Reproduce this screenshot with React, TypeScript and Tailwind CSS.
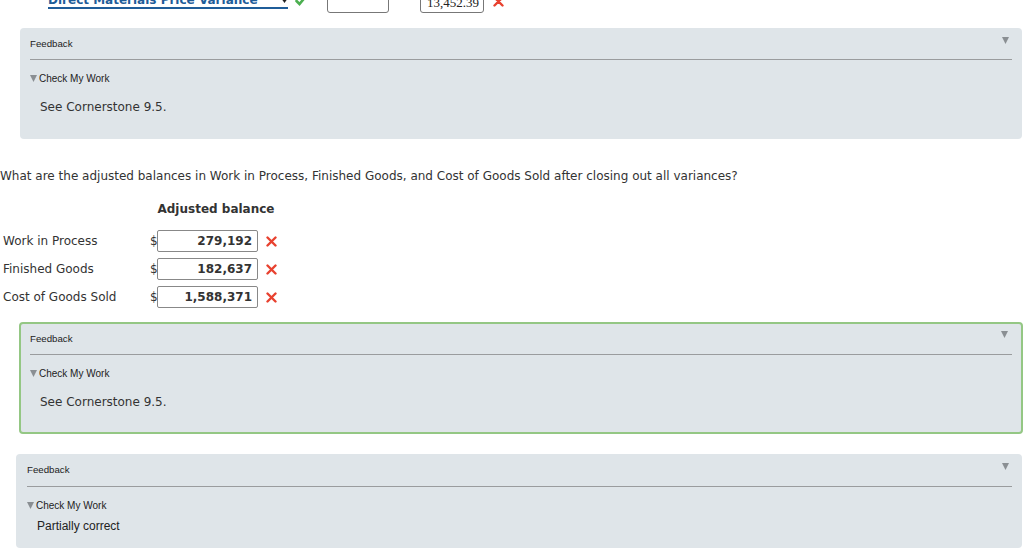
import React from "react";

const verdana = { fontFamily: '"DejaVu Sans", Verdana, sans-serif' };
const helv = { fontFamily: '"Liberation Sans", Arial, Helvetica, sans-serif' };

function Tri({ className = "" }: { className?: string }) {
  return (
    <svg width="7" height="7" viewBox="0 0 7 7" className={className}>
      <polygon points="0,0 7,0 3.5,7" fill="#8a8f93" />
    </svg>
  );
}

function RedX() {
  return (
    <svg width="11" height="11" viewBox="0 0 11 11">
      <path d="M1.5 1.5 L9.5 9.5 M9.5 1.5 L1.5 9.5" stroke="#e8412f" strokeWidth="2.4" strokeLinecap="round" />
    </svg>
  );
}

function Feedback({
  green = false,
  body,
  compact = false,
}: {
  green?: boolean;
  body: React.ReactNode;
  compact?: boolean;
}) {
  return (
    <div
      className={
        "relative h-full rounded-[4px] bg-[#dfe5e9] " +
        (green ? "border-2 border-[#94c784] " : "")
      }
    >
      <Tri className={"absolute right-[13px] " + (green ? "top-[7px]" : "top-[9px]")} />
      <div className={compact ? "pl-[11px] pr-[10px]" : green ? "pl-[9px] pr-[9px]" : "pl-[10px] pr-[10px]"}>
        <div
          className={
            "text-[9.7px] text-[#222] leading-none " +
            (green ? "pt-[10px] pb-[10px]" : compact ? "pt-[11px] pb-[11px]" : "pt-[11px] pb-[10px]")
          }
          style={helv}
        >
          Feedback
        </div>
        <div className="h-px bg-[#9a9c9e]" />
        <div className="flex items-center gap-[2px] pt-[14px] text-[10px] leading-none text-[#222]" style={helv}>
          <Tri />
          <span>Check My Work</span>
        </div>
        {body}
      </div>
    </div>
  );
}

export default function App() {
  const rows = [
    { label: "Work in Process", val: "279,192" },
    { label: "Finished Goods", val: "182,637" },
    { label: "Cost of Goods Sold", val: "1,588,371" },
  ];
  return (
    <div className="w-[1024px] h-[560px] overflow-hidden bg-white relative">
      {/* top cut-off row */}
      <div className="h-[14px] relative">
        <div className="absolute left-[48px] top-[-7px] w-[240px] flex items-center justify-between border-b-2 border-[#1f5d99]">
          <span className="text-[12px] font-bold text-[#1f5d99] leading-[14px]" style={verdana}>
            Direct Materials Price Variance
          </span>
          <svg width="7" height="5" viewBox="0 0 7 5"><polygon points="0,0 7,0 3.5,5" fill="#222" /></svg>
        </div>
        <svg width="11" height="9" viewBox="0 0 11 9" className="absolute left-[295px] top-[-3px]">
          <path d="M1.5 4 L4.5 7 L9.5 1" stroke="#4caf50" strokeWidth="2.6" fill="none" strokeLinecap="round" />
        </svg>
        <div className="absolute left-[327px] top-[-10px] w-[62px] h-[23px] border border-[#777] rounded-[3px] bg-white" />
        <div className="absolute left-[420px] top-[-10px] w-[64px] h-[23px] border border-[#777] rounded-[3px] bg-white flex items-end justify-end pr-[4px] pb-[3px]">
          <span className="text-[13px] leading-none text-[#222]" style={{ fontFamily: '"Liberation Serif", serif' }}>13,452.39</span>
        </div>
        <div className="absolute left-[493px] top-[-4px]"><RedX /></div>
      </div>

      <div className="ml-[20px] mr-[2px] mt-[14px] h-[111px]">
        <Feedback
          body={
            <div className="pl-[10px] pt-[16px] text-[12px] text-[#333] leading-[14px]" style={verdana}>
              See Cornerstone 9.5.
            </div>
          }
        />
      </div>

      <div className="mt-[29px] text-[12px] text-[#333] leading-[16px]" style={verdana}>
        What are the adjusted balances in Work in Process, Finished Goods, and Cost of Goods Sold after closing out all variances?
      </div>

      <div className="mt-[17px] text-[12px] font-bold text-[#333] leading-[16px] w-[432px] text-center" style={verdana}>
        Adjusted balance
      </div>

      <div className="mt-[13px] flex flex-col gap-[6px]" style={verdana}>
        {rows.map((r) => (
          <div key={r.label} className="flex items-center h-[22px]">
            <span className="w-[150px] pl-[3px] text-[12px] text-[#333]">{r.label}</span>
            <span className="w-[7px] text-[12px] text-[#333]">$</span>
            <div className="w-[101px] h-[22px] border border-[#888] rounded-[2px] bg-white flex items-center justify-end pr-[5px] text-[12px] font-bold text-[#333]">
              {r.val}
            </div>
            <span className="ml-[8px] flex"><RedX /></span>
          </div>
        ))}
      </div>

      <div className="ml-[19px] mr-[1px] mt-[14px] h-[112px]">
        <Feedback
          green
          body={
            <div className="pl-[10px] pt-[16px] text-[12px] text-[#333] leading-[14px]" style={verdana}>
              See Cornerstone 9.5.
            </div>
          }
        />
      </div>

      <div className="ml-[16px] mr-[2px] mt-[20px] h-[94px]">
        <Feedback
          compact
          body={
            <div className="pl-[10px] pt-[8px] text-[12px] text-[#222] leading-[14px]" style={helv}>
              Partially correct
            </div>
          }
        />
      </div>
    </div>
  );
}
